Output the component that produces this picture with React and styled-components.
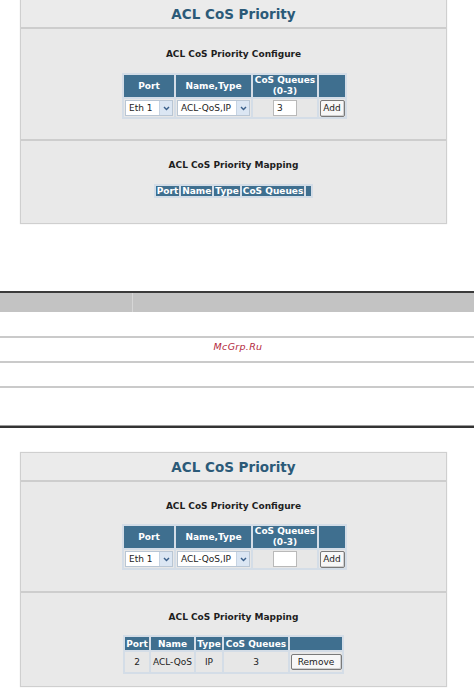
import React from "react";
import styled, { createGlobalStyle } from "styled-components";

const Global = createGlobalStyle`
  html, body { margin: 0; padding: 0; background: #ffffff; }
  body { width: 474px; height: 690px; overflow: hidden; font-family: "DejaVu Sans", Verdana, sans-serif; }
`;

const Page = styled.div`
  display: flex;
  flex-direction: column;
  width: 474px;
`;

const Panel = styled.div`
  margin: ${(p) => p.$margin};
  width: 425px;
  background: #e9e9e9;
  border: 1px solid #cfcfcf;
  box-shadow: 0 0 1px #d8d8d8;
  display: flex;
  flex-direction: column;
`;

const TitleBar = styled.div`
  height: 27px;
  display: flex;
  align-items: center;
  justify-content: center;
  font-weight: bold;
  font-size: 13.5px;
  color: #2b5a78;
  border-bottom: 2px solid #cdcdcd;
  background: #ebebeb;
`;

const Section = styled.div`
  display: flex;
  flex-direction: column;
  align-items: center;
  padding: ${(p) => p.$pad};
  border-bottom: ${(p) => (p.$divider ? "2px solid #cdcdcd" : "none")};
`;

const SubTitle = styled.div`
  font-weight: bold;
  font-size: 9px;
  color: #1e1e1e;
  line-height: 13px;
  white-space: nowrap;
  margin-bottom: ${(p) => p.$gap}px;
`;

const Table = styled.table`
  border-collapse: separate;
  border-spacing: 2px;
  background: #d4dde7;
  table-layout: ${(p) => (p.$w ? "fixed" : "auto")};
  width: ${(p) => (p.$w ? `${p.$w}px` : "auto")};
  margin-left: ${(p) => p.$shift || 0}px;
`;

const Th = styled.th`
  background: #3f6f8f;
  color: #ffffff;
  font-weight: bold;
  font-size: 9px;
  line-height: ${(p) => p.$lh || 10}px;
  height: ${(p) => p.$h}px;
  width: ${(p) => (p.$w ? `${p.$w}px` : "auto")};
  padding: ${(p) => (p.$w ? "0" : "0 1px")};
  text-align: center;
  white-space: nowrap;
  overflow: hidden;
`;

const Td = styled.td`
  background: #e7e7e7;
  height: ${(p) => p.$h}px;
  padding: 0;
  font-size: 9px;
  color: #222;
  text-align: center;
  vertical-align: middle;
  white-space: nowrap;
`;

const FakeSelect = styled.div`
  display: flex;
  align-items: center;
  justify-content: space-between;
  width: ${(p) => p.$w}px;
  height: 16px;
  margin: 0 auto;
  background: #fff;
  border: 1px solid #b9c6d4;
  box-sizing: border-box;
  font-size: 9px;
  color: #222;
  padding-left: 3px;
  white-space: nowrap;
`;

const Arrow = styled.span`
  width: 12px;
  height: 14px;
  background: #dbe6f3;
  border-left: 1px solid #c6d3e2;
  display: flex;
  align-items: center;
  justify-content: center;
`;

const TextBox = styled.div`
  width: 24px;
  height: 16px;
  margin: 0 auto;
  background: #fff;
  border: 1px solid #b9b9b9;
  box-sizing: border-box;
  font-size: 9px;
  text-align: left;
  padding-left: 3px;
  line-height: 14px;
`;

const Button = styled.div`
  width: ${(p) => p.$w}px;
  height: ${(p) => p.$h}px;
  margin: 0 auto;
  background: #f7f7f7;
  border: 1px solid #7a7a7a;
  border-radius: 2px;
  box-sizing: border-box;
  font-size: 9px;
  color: #222;
  display: flex;
  align-items: center;
  justify-content: center;
  box-shadow: inset -1px -1px 0 #cfcfcf;
`;

const Doc = styled.div`
  margin-top: ${(p) => p.$top}px;
  width: 474px;
  border-top: 2px solid #3a3a3a;
  display: flex;
  flex-direction: column;
`;

const DocHead = styled.div`
  height: 19px;
  background: #c3c3c3;
  display: grid;
  grid-template-columns: 133px 1fr;
`;

const HeadCell = styled.div`
  border-right: ${(p) => (p.$sep ? "1px solid #d6d6d6" : "none")};
`;

const DocRow = styled.div`
  height: ${(p) => p.$h}px;
  border-bottom: ${(p) => p.$line};
  display: flex;
  justify-content: center;
  align-items: flex-start;
`;

const Watermark = styled.span`
  font-style: italic;
  font-size: 9.5px;
  color: #b3283c;
  margin-top: 3px;
  margin-left: 2px;
  letter-spacing: 0.3px;
`;

const Chevron = () => (
  <svg width="7" height="5" viewBox="0 0 8 6">
    <path d="M1 1.2 L4 4.2 L7 1.2" fill="none" stroke="#3a5f8a" strokeWidth="1.7" />
  </svg>
);

function ConfigureTable({ value }) {
  return (
    <Table $w={225} $shift={2}>
      <thead>
        <tr>
          <Th $w={50} $h={22}>Port</Th>
          <Th $w={75} $h={22}>Name,Type</Th>
          <Th $w={64} $h={22} $lh={11}>
            CoS Queues
            <br />
            (0-3)
          </Th>
          <Th $w={26} $h={22}></Th>
        </tr>
      </thead>
      <tbody>
        <tr>
          <Td $h={18}>
            <FakeSelect $w={48}>
              <span>Eth 1</span>
              <Arrow>
                <Chevron />
              </Arrow>
            </FakeSelect>
          </Td>
          <Td $h={18}>
            <FakeSelect $w={73}>
              <span>ACL-QoS,IP</span>
              <Arrow>
                <Chevron />
              </Arrow>
            </FakeSelect>
          </Td>
          <Td $h={18}>
            <TextBox>{value}</TextBox>
          </Td>
          <Td $h={18}>
            <Button $w={25} $h={17}>Add</Button>
          </Td>
        </tr>
      </tbody>
    </Table>
  );
}

export default function App() {
  return (
    <Page>
      <Global />
      <Panel $margin="-1px 0 0 20px">
        <TitleBar>ACL CoS Priority</TitleBar>
        <Section $pad="19px 0 20px" $divider>
          <SubTitle $gap={12}>ACL CoS Priority Configure</SubTitle>
          <ConfigureTable value="3" />
        </Section>
        <Section $pad="18px 0 25px">
          <SubTitle $gap={12}>ACL CoS Priority Mapping</SubTitle>
          <Table>
            <thead>
              <tr>
                <Th $h={10}>Port</Th>
                <Th $h={10}>Name</Th>
                <Th $h={10}>Type</Th>
                <Th $h={10}>CoS Queues</Th>
                <Th $w={5} $h={10}></Th>
              </tr>
            </thead>
          </Table>
        </Section>
      </Panel>

      <Doc $top={67}>
        <DocHead>
          <HeadCell $sep />
          <HeadCell />
        </DocHead>
        <DocRow $h={24} $line="2px solid #cacaca" />
        <DocRow $h={23} $line="2px solid #cacaca">
          <Watermark>McGrp.Ru</Watermark>
        </DocRow>
        <DocRow $h={23} $line="2px solid #cacaca" />
        <DocRow $h={37} $line="1px solid #9a9a9a" />
        <DocRow $h={0} $line="2px solid #333333" />
      </Doc>

      <Panel $margin="24px 0 0 20px">
        <TitleBar>ACL CoS Priority</TitleBar>
        <Section $pad="18px 0 21px" $divider>
          <SubTitle $gap={11}>ACL CoS Priority Configure</SubTitle>
          <ConfigureTable value="" />
        </Section>
        <Section $pad="18px 0 12px">
          <SubTitle $gap={11}>ACL CoS Priority Mapping</SubTitle>
          <Table $w={221}>
            <thead>
              <tr>
                <Th $w={24} $h={13}>Port</Th>
                <Th $w={43} $h={13}>Name</Th>
                <Th $w={26} $h={13}>Type</Th>
                <Th $w={64} $h={13}>CoS Queues</Th>
                <Th $w={52} $h={13}></Th>
              </tr>
            </thead>
            <tbody>
              <tr>
                <Td $h={20}>2</Td>
                <Td $h={20}>ACL-QoS</Td>
                <Td $h={20}>IP</Td>
                <Td $h={20}>3</Td>
                <Td $h={20}>
                  <Button $w={51} $h={16}>Remove</Button>
                </Td>
              </tr>
            </tbody>
          </Table>
        </Section>
      </Panel>
    </Page>
  );
}
